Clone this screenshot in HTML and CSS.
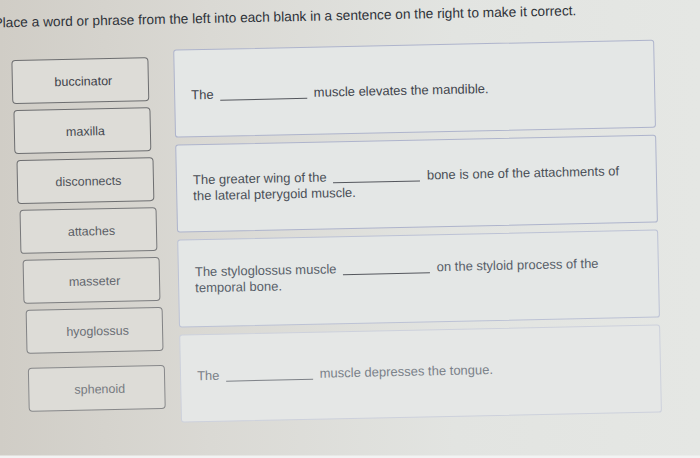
FILE: index.html
```html
<!DOCTYPE html>
<html lang="en">
<head>
<meta charset="UTF-8">
<meta name="viewport" content="width=device-width, initial-scale=1.0">
<title>Matching - Sentence Completion</title>
<link rel="stylesheet" href="styles.css">
</head>
<body>

<div class="page">
    <p class="prompt">Place a word or phrase from the left into each blank in a sentence on the right to make it correct.</p>

    <div class="quiz">
        <div class="bank">
            <div class="tile">buccinator</div>
            <div class="tile">maxilla</div>
            <div class="tile">disconnects</div>
            <div class="tile">attaches</div>
            <div class="tile">masseter</div>
            <div class="tile">hyoglossus</div>
            <div class="tile">sphenoid</div>
        </div>

        <div class="sentences">
            <div class="sentence">
                <p>The <span class="blank"></span> muscle elevates the mandible.</p>
            </div>
            <div class="sentence">
                <p>The greater wing of the <span class="blank"></span> bone is one of the attachments of the lateral pterygoid muscle.</p>
            </div>
            <div class="sentence">
                <p>The styloglossus muscle <span class="blank"></span> on the styloid process of the temporal bone.</p>
            </div>
            <div class="sentence">
                <p>The <span class="blank"></span> muscle depresses the tongue.</p>
            </div>
        </div>
    </div>
</div>

</body>
</html>
```

FILE: styles.css
```css
body {
    font-family: "Liberation Sans", Arial, sans-serif;
    margin: 0;
    height: 458px;
    overflow: hidden;
    background:
        linear-gradient(to bottom, transparent 455px, #f2f3f3 456px),
        linear-gradient(to right, #d0cdc6 0%, #dad9d4 30%, #e2e4e1 65%, #e5e7e4 100%);
}
.page {
    height: 458px;
    transform: rotate(-1.2deg);
    transform-origin: 350px 229px;
}
.prompt {
    margin: 0;
    padding-top: 8px;
    font-size: 13.7px;
    line-height: 16px;
    color: #2e3239;
    text-indent: -2px;
    white-space: nowrap;
}
.quiz {
    display: flex;
    align-items: flex-start;
}

/* word bank */
.bank {
    display: flex;
    flex-direction: column;
    gap: 6px;
    padding-top: 29px;
    width: 177px;
    flex-shrink: 0;
}
.tile {
    display: flex;
    align-items: center;
    justify-content: center;
    width: 137px;
    height: 44px;
    padding: 2px 0 0 6px;
    box-sizing: border-box;
    border: 1px solid #6d6e70;
    border-radius: 4px;
    background-color: #dddcd7;
    font-size: 12.5px;
    color: #3c4048;
}
.tile:nth-child(1) { margin-left: 15px; }
.tile:nth-child(2) { margin-left: 16px; color: #454950; }
.tile:nth-child(3) { margin-left: 18px; color: #4e5259; }
.tile:nth-child(4) { margin-left: 20px; color: #5a5e65; border-color: #77787a; }
.tile:nth-child(5) { margin-left: 22px; color: #62666d; border-color: #7c7d7f; }
.tile:nth-child(6) { margin-left: 24px; color: #6a6e75; border-color: #818284; }
.tile:nth-child(7) { margin-left: 25px; margin-top: 8px; color: #767a80; border-color: #87888a; }

/* sentences */
.sentences {
    display: flex;
    flex-direction: column;
    gap: 7px;
    padding-top: 22px;
}
.sentence {
    display: flex;
    align-items: center;
    width: 481px;
    height: 88px;
    box-sizing: border-box;
    padding: 0 24px 0 16px;
    border: 1px solid #aeb4cc;
    border-radius: 3px;
    background-color: #e4e7e6;
}
.sentence p {
    margin: 0;
    font-size: 13px;
    line-height: 16px;
    color: #3f444c;
}
.sentence:nth-child(1) p { padding-top: 3px; }
.sentence:nth-child(2) p { color: #4a4f57; }
.sentence:nth-child(3) { border-color: #bcc2d5; }
.sentence:nth-child(3) p { color: #586069; padding-bottom: 6px; }
.sentence:nth-child(4) { border-color: #cdd1dc; background-color: #e5e7e6; }
.sentence:nth-child(4) p { color: #7a8189; padding-bottom: 5px; }
.blank {
    display: inline-block;
    width: 87px;
    margin: 0 3px;
    border-bottom: 1px solid #54575d;
    vertical-align: -2px;
}
.sentence:nth-child(4) .blank {
    border-bottom-color: #7d8187;
}
```
